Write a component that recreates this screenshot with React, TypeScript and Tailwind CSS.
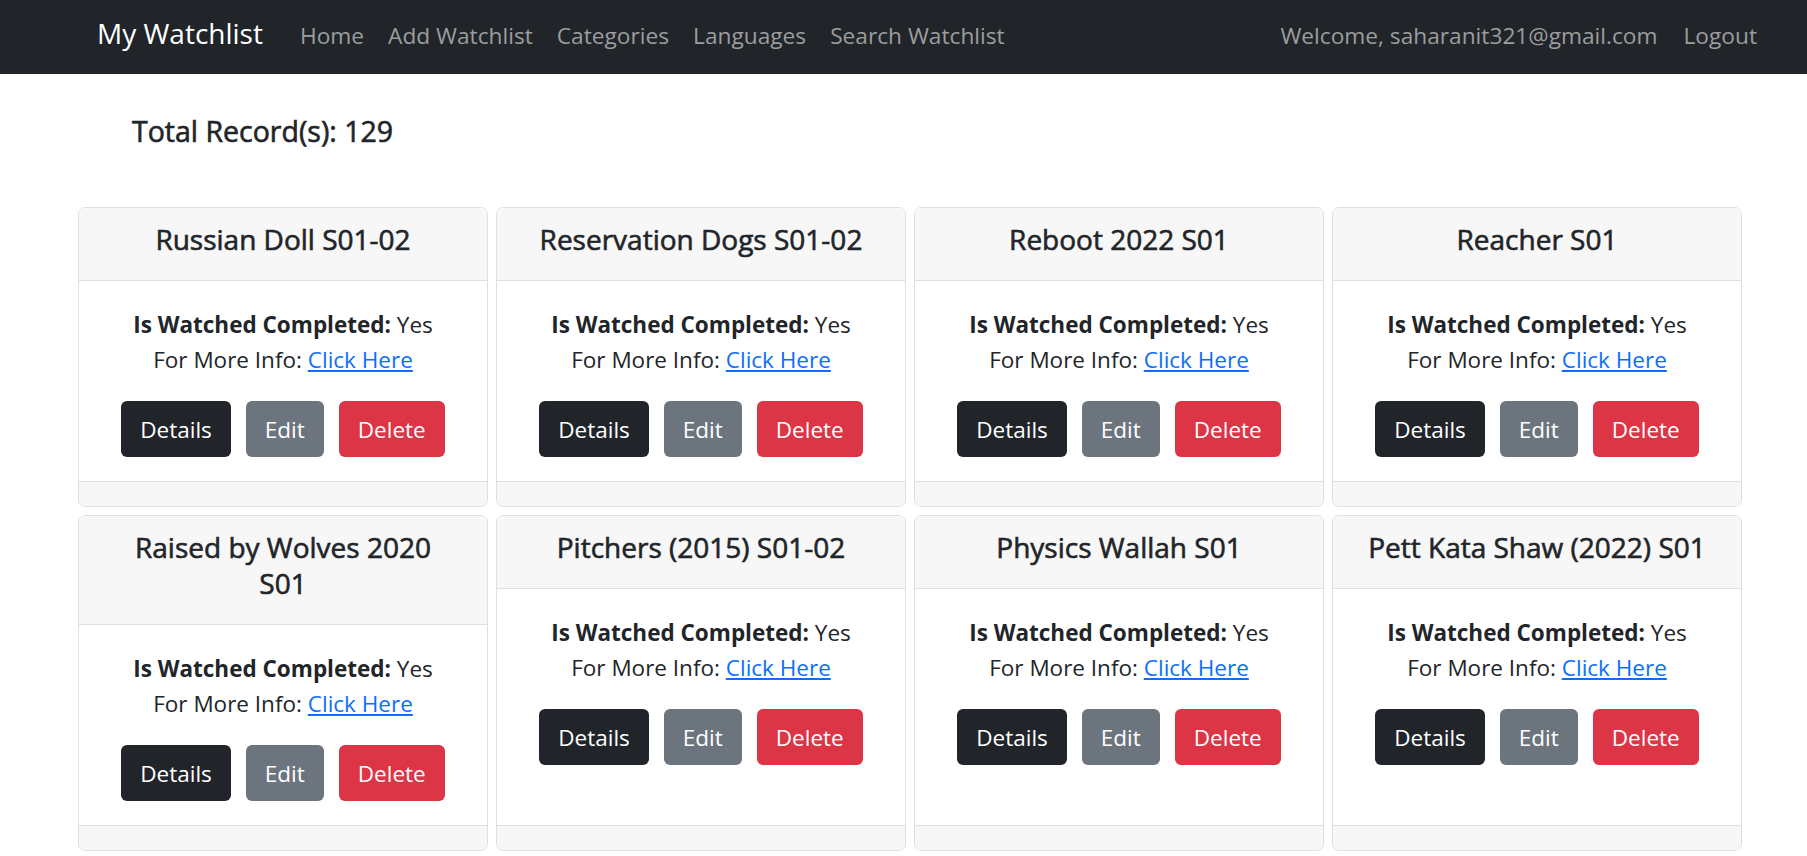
import React from "react";

const links = ["Home", "Add Watchlist", "Categories", "Languages", "Search Watchlist"];

const items = [
  "Russian Doll S01-02",
  "Reservation Dogs S01-02",
  "Reboot 2022 S01",
  "Reacher S01",
  "Raised by Wolves 2020 S01",
  "Pitchers (2015) S01-02",
  "Physics Wallah S01",
  "Pett Kata Shaw (2022) S01",
];

function Card({ title }: { title: string }) {
  return (
    <div className="flex flex-col overflow-hidden rounded-[7px] border border-[#dfdfdf] bg-white">
      <div className="border-b border-[#dfdfdf] bg-[#f7f7f7] px-[33px] pt-[13px] pb-[23px] text-center text-[28px] font-normal leading-[36px] [-webkit-text-stroke:0.6px_#212529]">
        {title}
      </div>
      <div className="flex-1 px-[23px] pt-[26px] pb-[24px] text-center text-[22.5px] leading-[35px]">
        <div>
          <b className="font-bold">Is Watched Completed:</b> Yes
        </div>
        <div>
          For More Info:{" "}
          <a href="#" className="text-[#0d6efd] underline">
            Click Here
          </a>
        </div>
        <div className="mt-[24px] flex justify-center gap-[15px]">
          <button className="flex h-[56px] items-center rounded-[6px] bg-[#212529] px-[19px] text-[22.5px] text-white">
            Details
          </button>
          <button className="flex h-[56px] items-center rounded-[6px] bg-[#6c757d] px-[19px] text-[22.5px] text-white">
            Edit
          </button>
          <button className="flex h-[56px] items-center rounded-[6px] bg-[#dc3545] px-[19px] text-[22.5px] text-white">
            Delete
          </button>
        </div>
      </div>
      <div className="h-[25px] border-t border-[#dfdfdf] bg-[#f7f7f7]" />
    </div>
  );
}

export default function App() {
  return (
    <div className="h-[856px] overflow-hidden bg-white font-['Open_Sans','Noto_Sans',sans-serif] text-[#212529]">
      <nav className="flex h-[74px] items-baseline bg-[#212529] pt-[15px] pl-[97px] pr-[38px]">
        <a href="#" className="mr-[25px] text-[28px] leading-[36px] text-white">
          My Watchlist
        </a>
        {links.map((l) => (
          <a key={l} href="#" className="px-[12px] text-[22.7px] leading-[33px] text-[#9b9d9f]">
            {l}
          </a>
        ))}
        <div className="ml-auto flex items-baseline">
          <span className="text-[22.7px] leading-[33px] text-[#9b9d9f]">Welcome, saharanit321@gmail.com</span>
          <a href="#" className="ml-[14px] px-[12px] text-[22.7px] leading-[33px] text-[#9b9d9f]">
            Logout
          </a>
        </div>
      </nav>
      <main className="pl-[78px]">
        <h3 className="mt-[40px] ml-[54px] text-[28.5px] font-normal leading-[34px] [-webkit-text-stroke:0.6px_#212529]">
          Total Record(s): 129
        </h3>
        <div className="mt-[59px] grid w-[1664px] grid-cols-4 gap-[8px]">
          {items.map((t) => (
            <Card key={t} title={t} />
          ))}
        </div>
      </main>
    </div>
  );
}
